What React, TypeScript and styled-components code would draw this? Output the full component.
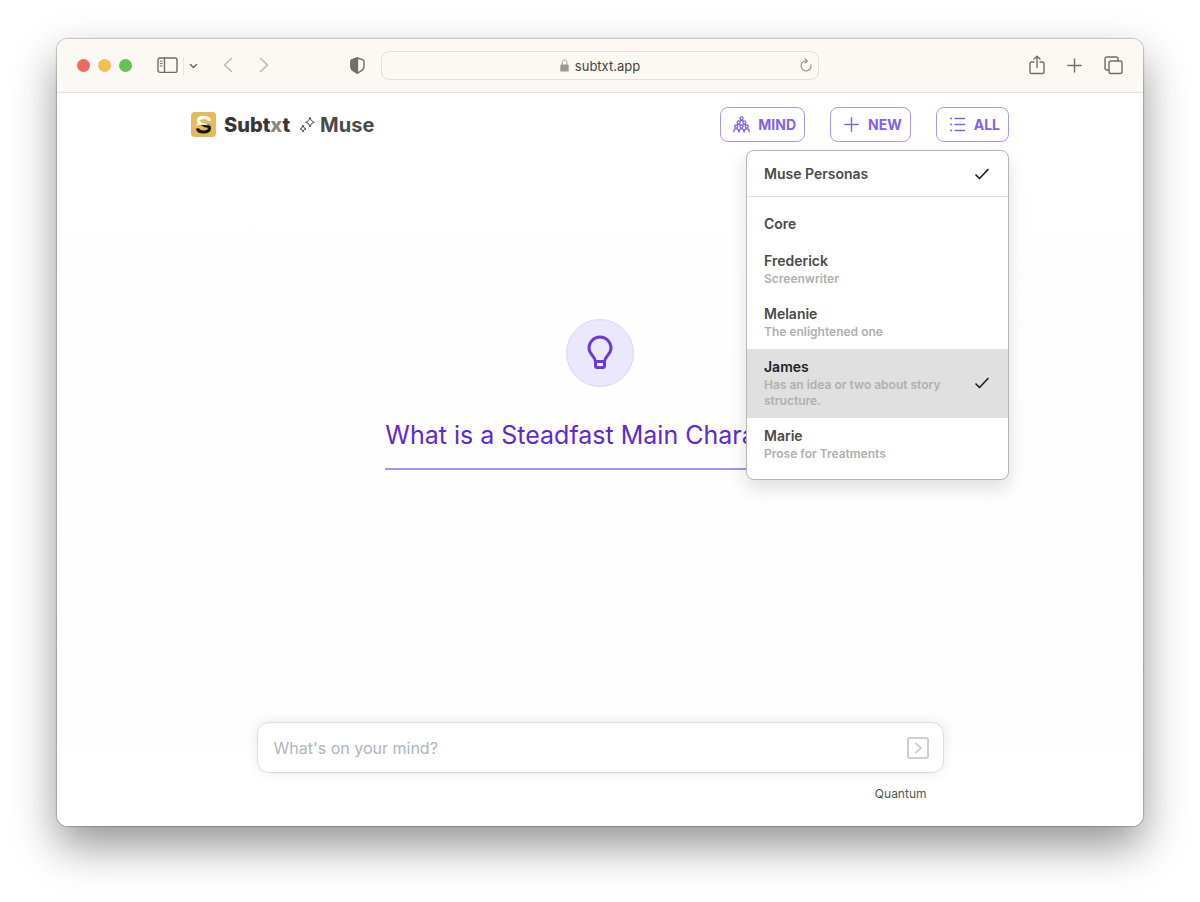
import React, { useState } from "react";
import styled, { createGlobalStyle } from "styled-components";

const GlobalStyle = createGlobalStyle`
  *, *::before, *::after { box-sizing: border-box; }
  body {
    margin: 0;
    background: #fff;
    font-family: Inter, "Liberation Sans", sans-serif;
    color: #4a4a4a;
  }
  button, input {
    font: inherit;
    color: inherit;
  }
  button {
    padding: 0;
    border: 0;
    background: none;
    cursor: pointer;
  }
`;

const Desktop = styled.div`
  display: flex;
  min-height: 100vh;
  padding: 39px 57px 76px;
`;

const Window = styled.div`
  display: flex;
  flex: 1;
  flex-direction: column;
  min-width: 0;
  border-radius: 11px;
  background: #fff;
  box-shadow:
    0 0 1px 1px rgba(0, 0, 0, 0.2),
    0 20px 44px rgba(0, 0, 0, 0.42);
`;

const Toolbar = styled.header`
  display: grid;
  grid-template-columns: 1fr minmax(160px, 438px) 1fr;
  align-items: center;
  gap: 16px;
  height: 54px;
  padding: 0 20px;
  border-bottom: 1px solid #e3e1dd;
  border-radius: 11px 11px 0 0;
  background: #fcf9f4;
  color: #716d67;
`;

const ToolGroup = styled.div<{ $gap: number }>`
  display: flex;
  align-items: center;
  gap: ${(p) => p.$gap}px;
`;

const LeftTools = styled.div`
  display: flex;
  align-items: center;
  justify-content: space-between;
`;

const RightTools = styled(ToolGroup)`
  justify-content: flex-end;
`;

const Light = styled.button<{ $color: string }>`
  width: 13px;
  height: 13px;
  border-radius: 50%;
  background: ${(p) => p.$color};
`;

const Tool = styled.button<{ $faded?: boolean }>`
  display: flex;
  color: ${(p) => (p.$faded ? "#b9b6b1" : "inherit")};
`;

const Divider = styled.span`
  width: 1px;
  height: 18px;
  background: #e8e5e0;
`;

const Address = styled.div`
  display: grid;
  grid-template-columns: 1fr auto 1fr;
  align-items: center;
  height: 29px;
  padding: 0 6px;
  border: 1px solid #e3e0db;
  border-radius: 8px;
  color: #8d8a86;
`;

const AddressText = styled.span`
  display: flex;
  align-items: center;
  gap: 6px;
  grid-column: 2;
  color: #45433f;
  font-size: 13px;
`;

const ReloadButton = styled(Tool)`
  justify-self: end;
`;

const Page = styled.main`
  display: flex;
  flex: 1;
  flex-direction: column;
  align-items: center;
  padding: 0 20px 24px;
  border-radius: 0 0 11px 11px;
  background: linear-gradient(#fff, #fdfdfd calc(100% - 81px), #fff calc(100% - 80px));
`;

const AppBar = styled.div`
  position: relative;
  z-index: 1;
  display: flex;
  align-items: center;
  justify-content: space-between;
  width: 100%;
  max-width: 818px;
  padding-top: 14px;
`;

const Brand = styled.a`
  display: flex;
  align-items: center;
  gap: 8px;
  color: #4a4a4a;
  font-size: 20px;
  font-weight: 700;
  line-height: 24px;
  text-decoration: none;
`;

const BrandName = styled.span`
  color: #363636;
  font-weight: 800;
`;

const BrandLight = styled.span`
  color: #8a8a8a;
`;

const BrandProduct = styled.span`
  display: flex;
  align-items: center;
  gap: 5px;
  padding-left: 1px;
`;

const Actions = styled.nav`
  display: flex;
  gap: 25px;
`;

const Action = styled.button`
  display: flex;
  align-items: center;
  gap: 8px;
  height: 35px;
  padding: 0 8px 0 12px;
  border: 1px solid #ab96f8;
  border-radius: 8px;
  background: #fff;
  color: #8460ee;
  font-size: 14px;
  font-weight: 700;
`;

const Menu = styled.div`
  position: absolute;
  top: calc(100% + 8px);
  right: 0;
  width: 263px;
  border: 1px solid #b5b5b5;
  border-radius: 8px;
  background: #fff;
  box-shadow: 0 8px 18px rgba(0, 0, 0, 0.13);
  overflow: hidden;
`;

const MenuTitle = styled.div`
  display: flex;
  align-items: center;
  justify-content: space-between;
  height: 46px;
  padding: 0 18px 0 17px;
  border-bottom: 1px solid #e0e0e0;
  font-size: 14px;
  font-weight: 600;
`;

const MenuList = styled.ul`
  margin: 0;
  padding: 8px 0;
  list-style: none;
`;

const MenuHeading = styled.li`
  padding: 9px 17px;
  font-size: 14px;
  font-weight: 600;
  line-height: 20px;
`;

const Persona = styled.button<{ $selected: boolean }>`
  display: flex;
  align-items: center;
  justify-content: space-between;
  gap: 12px;
  width: 100%;
  padding: 8px 18px 9px 17px;
  background: ${(p) => (p.$selected ? "#e0e0e0" : "transparent")};
  color: ${(p) => (p.$selected ? "#222" : "#4a4a4a")};
  text-align: left;
`;

const PersonaText = styled.span`
  display: flex;
  flex-direction: column;
`;

const PersonaName = styled.span`
  font-size: 14px;
  font-weight: 600;
  line-height: 20px;
`;

const PersonaNote = styled.span`
  color: #b0b0b0;
  font-size: 12px;
  font-weight: 600;
  line-height: 16px;
`;

const Hero = styled.section`
  display: flex;
  flex: 1;
  flex-direction: column;
  align-items: center;
  justify-content: center;
  gap: 32px;
  padding-bottom: 75px;
`;

const Badge = styled.div`
  display: grid;
  place-items: center;
  width: 68px;
  height: 68px;
  border: 1px solid #dcd5fb;
  border-radius: 50%;
  background: #ebe7fc;
  color: #6d3ad6;
`;

const Question = styled.h1`
  margin: 0;
  padding-bottom: 17px;
  border-bottom: 2px solid #a68ff5;
  color: #6029cf;
  font-size: 25px;
  font-weight: 400;
  line-height: 32px;
`;

const Composer = styled.form`
  display: flex;
  flex-direction: column;
  align-items: flex-end;
  gap: 13px;
  width: 100%;
  max-width: 687px;
`;

const Field = styled.div`
  display: flex;
  align-items: center;
  width: 100%;
  height: 51px;
  padding: 0 14px 0 16px;
  border: 1px solid #dedede;
  border-radius: 12px;
  background: #fff;
  box-shadow: 0 0 12px rgba(0, 0, 0, 0.09);
`;

const Prompt = styled.input`
  flex: 1;
  min-width: 0;
  padding: 0;
  border: 0;
  outline: 0;
  background: transparent;
  font-size: 16px;
  &::placeholder {
    color: #adb5be;
    opacity: 1;
  }
`;

const Model = styled.button`
  margin-right: 17px;
  color: #555;
  font-size: 12px;
  line-height: 16px;
`;

const Glyph = styled.svg`
  flex-shrink: 0;
`;

type IconProps = { w: number; h: number; stroke?: number; children: React.ReactNode };

const Icon = ({ w, h, stroke = 1.4, children }: IconProps) => (
  <Glyph
    width={w}
    height={h}
    viewBox={`0 0 ${w} ${h}`}
    fill="none"
    stroke="currentColor"
    strokeWidth={stroke}
    strokeLinecap="round"
    strokeLinejoin="round"
    aria-hidden="true"
  >
    {children}
  </Glyph>
);

const CheckIcon = () => (
  <Icon w={16} h={14} stroke={1.7}>
    <path d="M2 8 L5.5 11.5 L14 2.5" stroke="#222" />
  </Icon>
);

const CrowdIcon = () => (
  <Icon w={17} h={17} stroke={1.3}>
    <circle cx="8.5" cy="2.4" r="1.5" />
    <circle cx="5.6" cy="6.4" r="1.5" />
    <circle cx="11.4" cy="6.4" r="1.5" />
    <circle cx="3.2" cy="10.5" r="1.5" />
    <circle cx="8.5" cy="10.5" r="1.5" />
    <circle cx="13.8" cy="10.5" r="1.5" />
    <path d="M7 5 Q8.5 3.6 10 5" />
    <path d="M4.4 9 Q5.8 7.6 7 9 M10 9 Q11.4 7.6 12.6 9" />
    <path d="M0.8 15.8 C0.8 11.6 5.6 11.6 5.8 15.8" />
    <path d="M6 15.8 C6.2 11.6 10.8 11.6 11 15.8" />
    <path d="M11.2 15.8 C11.4 11.6 16.2 11.6 16.2 15.8" />
  </Icon>
);

const LogoIcon = () => (
  <svg width="25" height="25" viewBox="0 0 25 25" fill="none" aria-hidden="true">
    <rect width="25" height="25" rx="4" fill="#e3bb5c" />
    <path
      d="M18.4 8.8 C17.6 4.2 7.6 4.2 7.4 8.6 C7.4 10 8.2 11 9.8 11.5"
      stroke="#fff"
      strokeWidth="3.2"
    />
    <path
      d="M6.4 16.4 C7.4 21.4 18.6 21 18.4 16.4 C18.4 14.8 17.4 14 15.6 13.6"
      stroke="#151515"
      strokeWidth="3.2"
    />
    <path d="M9 12.6 L18 12.6 L19.8 14.6 L14 15.4 Z" fill="#151515" />
    <path d="M4.4 13.2 L9 10.6 L20.6 13.4 L11 12.7 Z" fill="#fff" />
  </svg>
);

const personas = [
  { name: "Frederick", note: "Screenwriter" },
  { name: "Melanie", note: "The enlightened one" },
  { name: "James", note: "Has an idea or two about story structure." },
  { name: "Marie", note: "Prose for Treatments" },
];

const lights = [
  { label: "Close", color: "#ed6a5e" },
  { label: "Minimize", color: "#f5bf4f" },
  { label: "Zoom", color: "#61c554" },
];

export default function App() {
  const [selected, setSelected] = useState("James");
  const [text, setText] = useState("");

  return (
    <>
      <GlobalStyle />
      <Desktop>
        <Window>
          <Toolbar>
            <LeftTools>
              <ToolGroup $gap={25}>
                <ToolGroup $gap={8}>
                  {lights.map((l) => (
                    <Light key={l.label} type="button" aria-label={l.label} $color={l.color} />
                  ))}
                </ToolGroup>
                <ToolGroup $gap={5}>
                  <Tool type="button" aria-label="Sidebar">
                    <Icon w={21} h={18}>
                      <rect x="1" y="1" width="19" height="14.4" rx="2" />
                      <path d="M7.5 1V15" />
                      <path d="M3.2 4.2h2M3.2 6.6h2M3.2 9h2" strokeWidth="1" />
                    </Icon>
                  </Tool>
                  <Divider />
                  <Tool type="button" aria-label="Tab groups">
                    <Icon w={9} h={6} stroke={1.6}>
                      <path d="M1.5 1.5 L4.5 4.5 L7.5 1.5" />
                    </Icon>
                  </Tool>
                </ToolGroup>
                <ToolGroup $gap={26}>
                  <Tool type="button" aria-label="Back" $faded>
                    <Icon w={10} h={18} stroke={1.5}>
                      <path d="M8.5 1.5 L1.5 8 L8.5 14.5" />
                    </Icon>
                  </Tool>
                  <Tool type="button" aria-label="Forward" $faded>
                    <Icon w={10} h={18} stroke={1.5}>
                      <path d="M1.5 1.5 L8.5 8 L1.5 14.5" />
                    </Icon>
                  </Tool>
                </ToolGroup>
              </ToolGroup>
              <Tool type="button" aria-label="Privacy report">
                <Icon w={15} h={18}>
                  <path d="M7.5 1 L13 2.8 Q14 3.2 14 4.2 V9.6 C14 12.6 10.5 14.8 7.5 16 C4.5 14.8 1 12.6 1 9.6 V4.2 Q1 3.2 2 2.8 Z" />
                  <path
                    d="M7.5 1 V16 C4.5 14.8 1 12.6 1 9.6 V4.2 Q1 3.2 2 2.8 Z"
                    fill="currentColor"
                  />
                </Icon>
              </Tool>
            </LeftTools>
            <Address>
              <AddressText>
                <Icon w={9} h={13} stroke={1}>
                  <path d="M2.2 6 V3.4 C2.2 0.2 6.8 0.2 6.8 3.4 V6" stroke="#9b9894" />
                  <rect x="0.3" y="5.6" width="8.4" height="7" rx="1.2" fill="#9b9894" stroke="none" />
                </Icon>
                subtxt.app
              </AddressText>
              <ReloadButton type="button" aria-label="Reload">
                <Icon w={12} h={15} stroke={1.1}>
                  <path d="M10.9 6.8 A5 5 0 1 1 6.8 3" />
                  <path d="M5 0.8 L7.3 3 L5 5.2" />
                </Icon>
              </ReloadButton>
            </Address>
            <RightTools $gap={22}>
              <Tool type="button" aria-label="Share">
                <Icon w={16} h={22}>
                  <path d="M5 7 H2.6 Q1 7 1 8.6 V16.9 Q1 18.5 2.6 18.5 H13.4 Q15 18.5 15 16.9 V8.6 Q15 7 13.4 7 H11" />
                  <path d="M8 12.5 V1.4 M5 4 L8 1.2 L11 4" />
                </Icon>
              </Tool>
              <Tool type="button" aria-label="New tab">
                <Icon w={15} h={16}>
                  <path d="M7.5 0.9 V14.1 M0.9 7.5 H14.1" />
                </Icon>
              </Tool>
              <Tool type="button" aria-label="Show tabs">
                <Icon w={19} h={20}>
                  <rect x="5" y="5" width="13" height="12.5" rx="2" />
                  <path d="M5 14 H3 Q1 14 1 12 V3 Q1 1 3 1 H12 Q14 1 14 3 V5" />
                </Icon>
              </Tool>
            </RightTools>
          </Toolbar>

          <Page>
            <AppBar>
              <Brand href="#">
                <LogoIcon />
                <BrandName>
                  Subt<BrandLight>x</BrandLight>t
                </BrandName>
                <BrandProduct>
                  <Icon w={16} h={18} stroke={1}>
                    <path d="M11 1.6 Q11.6 5.6 15.3 6.3 Q11.6 7 11 11 Q10.4 7 6.7 6.3 Q10.4 5.6 11 1.6 Z" />
                    <path d="M4 9.5 Q4.4 12.4 7 12.8 Q4.4 13.2 4 16.1 Q3.6 13.2 1 12.8 Q3.6 12.4 4 9.5 Z" />
                  </Icon>
                  Muse
                </BrandProduct>
              </Brand>
              <Actions>
                <Action type="button">
                  <CrowdIcon />
                  MIND
                </Action>
                <Action type="button">
                  <Icon w={17} h={17}>
                    <path d="M8.5 1.8 V15.2 M1.8 8.5 H15.2" />
                  </Icon>
                  NEW
                </Action>
                <Action type="button">
                  <Icon w={17} h={17}>
                    <path d="M6 2.5 H15.5 M6 8.5 H15.5 M6 14.5 H15.5" />
                    <path d="M2 2.5 h.01 M2 8.5 h.01 M2 14.5 h.01" strokeWidth="2" />
                  </Icon>
                  ALL
                </Action>
              </Actions>
              <Menu>
                <MenuTitle>
                  Muse Personas
                  <CheckIcon />
                </MenuTitle>
                <MenuList>
                  <MenuHeading>Core</MenuHeading>
                  {personas.map((p) => (
                    <li key={p.name}>
                      <Persona
                        type="button"
                        $selected={p.name === selected}
                        aria-pressed={p.name === selected}
                        onClick={() => setSelected(p.name)}
                      >
                        <PersonaText>
                          <PersonaName>{p.name}</PersonaName>
                          <PersonaNote>{p.note}</PersonaNote>
                        </PersonaText>
                        {p.name === selected && <CheckIcon />}
                      </Persona>
                    </li>
                  ))}
                </MenuList>
              </Menu>
            </AppBar>

            <Hero>
              <Badge>
                <Icon w={28} h={36} stroke={3}>
                  <path d="M9.5 26.5 C9.5 21 3 20 3 13 A11 11 0 0 1 25 13 C25 20 18.5 21 18.5 26.5 Z" />
                  <path d="M9.5 26.5 V31 Q9.5 32.5 11 32.5 H17 Q18.5 32.5 18.5 31 V26.5" />
                </Icon>
              </Badge>
              <Question>What is a Steadfast Main Character?</Question>
            </Hero>

            <Composer onSubmit={(e) => e.preventDefault()}>
              <Field>
                <Prompt
                  aria-label="Message"
                  placeholder="What's on your mind?"
                  value={text}
                  onChange={(e) => setText(e.target.value)}
                />
                <Tool type="submit" aria-label="Send">
                  <Icon w={22} h={22} stroke={2}>
                    <rect x="1" y="1" width="20" height="20" rx="2" stroke="#cfcfcf" />
                    <path d="M9 6.5 L14 11 L9 15.5" stroke="#cfcfcf" />
                  </Icon>
                </Tool>
              </Field>
              <Model type="button">Quantum</Model>
            </Composer>
          </Page>
        </Window>
      </Desktop>
    </>
  );
}
